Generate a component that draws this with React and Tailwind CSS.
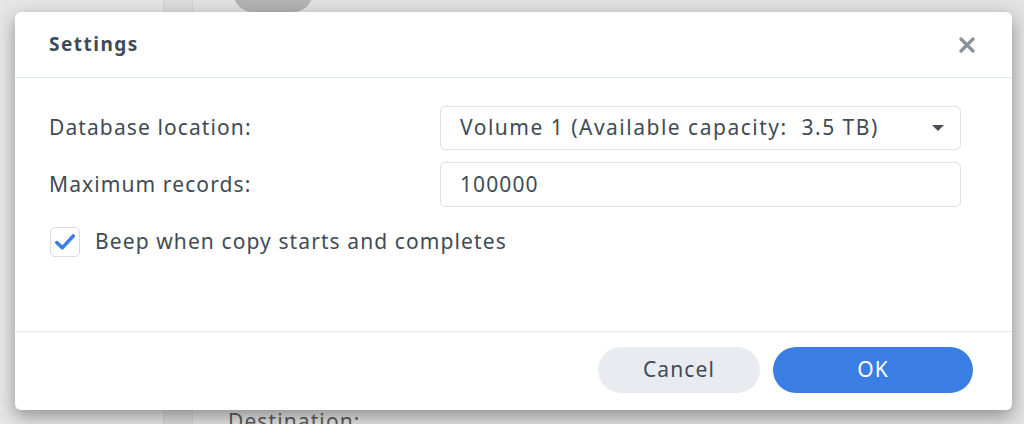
import React, { useState } from "react";

function CheckIcon() {
  return (
    <svg viewBox="0 0 20 20" className="w-[22px] h-[22px]" fill="none">
      <path
        d="M2.5 10.5l5 4.8L17.5 4.5"
        stroke="#3a7ee4"
        strokeWidth="3.2"
        strokeLinecap="round"
        strokeLinejoin="round"
      />
    </svg>
  );
}

function Backdrop() {
  return (
    <div className="flex h-full w-full bg-[#e2e2e2]">
      <div className="w-[163px] h-full bg-[#e6e6e6]" />
      <div className="w-[30px] h-full bg-[#dcdcdc] border-x border-[#cfd3d8]" />
      <div className="flex-1 flex flex-col justify-between pl-[40px]">
        <div className="w-[80px] h-[40px] -mt-[28px] rounded-full bg-[#b4b4b4] flex justify-center">
          <div className="w-[22px] h-[22px] mt-[6px] rounded-full bg-[#e8e8e8]" />
        </div>
        <div className="text-[21px] tracking-[1.1px] text-[#5c5c5c] leading-none -mb-[8px] -ml-[5px]">
          Destination:
        </div>
      </div>
    </div>
  );
}

function SettingsDialog() {
  const [beep, setBeep] = useState(true);

  return (
    <div className="absolute left-[15px] top-[12px] w-[997px] h-[398px] bg-white rounded-[6px] shadow-[0_6px_18px_rgba(0,0,0,0.38)] flex flex-col text-[#414b55] tracking-[1.1px]">
      <div className="h-[66px] flex items-center justify-between pl-[34px] pr-[37px] border-b border-[#e1e7ee]">
        <div className="text-[19px] font-bold tracking-[1.5px] text-[#3e4a56]">Settings</div>
        <svg viewBox="0 0 16 16" className="w-[16px] h-[16px]">
          <path d="M2 2L14 14M14 2L2 14" stroke="#8b9199" strokeWidth="3.2" strokeLinecap="round" />
        </svg>
      </div>

      <div className="flex-1 flex flex-col pl-[34px] pr-[51px] pt-[28px] gap-[12px]">
        <div className="flex items-center">
          <div className="w-[391px] text-[21px]">Database location:</div>
          <div className="flex-1 h-[44px] border border-[#d9e1ea] rounded-[5px] flex items-center justify-between pl-[19px] pr-[16px] text-[21px]">
            <span className="tracking-[1.5px]">Volume 1 (Available capacity:&nbsp; 3.5 TB)</span>
            <div className="w-0 h-0 border-x-[6px] border-x-transparent border-t-[6px] border-t-[#4a4f57]" />
          </div>
        </div>
        <div className="flex items-center">
          <div className="w-[391px] text-[21px]">Maximum records:</div>
          <div className="flex-1 h-[45px] border border-[#d9e1ea] rounded-[5px] flex items-center pl-[19px] text-[21px]">
            100000
          </div>
        </div>
        <div className="flex items-center gap-[15px] mt-[7px]">
          <button
            onClick={() => setBeep(!beep)}
            className="ml-[1px] w-[30px] h-[30px] border border-[#d3dde8] rounded-[5px] flex items-center justify-center"
          >
            {beep ? <CheckIcon /> : null}
          </button>
          <span className="text-[21px]">Beep when copy starts and completes</span>
        </div>
      </div>

      <div className="h-[79px] border-t border-[#e1e7ee] flex items-start justify-end pt-[15px] pr-[39px] gap-[13px]">
        <button className="w-[162px] h-[46px] rounded-full bg-[#e8ecf0] text-[21px] text-[#414b55]">
          Cancel
        </button>
        <button className="w-[200px] h-[46px] rounded-full bg-[#3a7ee4] text-[21px] text-white">
          OK
        </button>
      </div>
    </div>
  );
}

export default function App() {
  return (
    <div
      className="relative w-[1024px] h-[424px] overflow-hidden"
      style={{ fontFamily: '"Noto Sans", "Open Sans", sans-serif' }}
    >
      <Backdrop />
      <SettingsDialog />
    </div>
  );
}
